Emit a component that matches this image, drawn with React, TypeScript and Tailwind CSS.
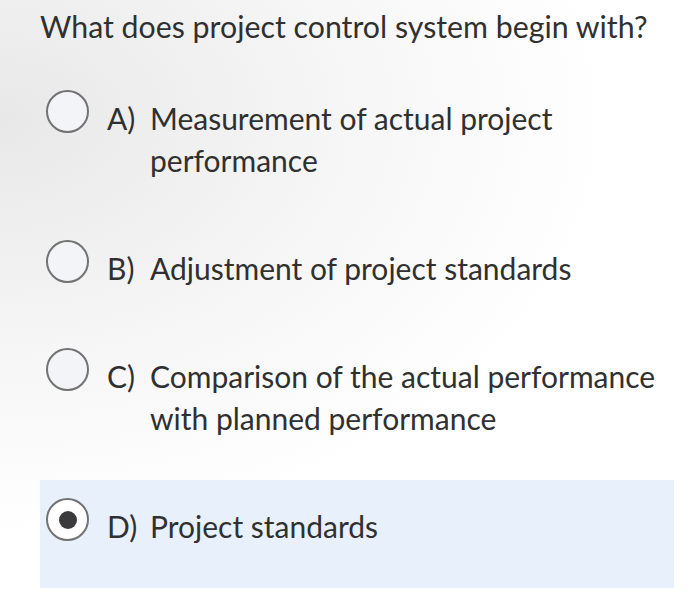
import type { ReactNode } from 'react'

type Option = {
  label: string
  text: ReactNode
  selected?: boolean
}

const options: Option[] = [
  { label: 'A)', text: <>Measurement of actual project<br />performance</> },
  { label: 'B)', text: 'Adjustment of project standards' },
  { label: 'C)', text: <>Comparison of the actual performance<br />with planned performance</> },
  { label: 'D)', text: 'Project standards', selected: true },
]

function Radio({ checked }: { checked?: boolean }) {
  return (
    <div
      className={`w-[43px] h-[43px] shrink-0 rounded-full border-2 border-[#727272] flex items-center justify-center -mt-[7px] ${
        checked ? 'bg-white' : 'bg-[#f3f4f8]'
      }`}
    >
      {checked && <div className="w-[18px] h-[18px] rounded-full bg-[#3b3b3d]" />}
    </div>
  )
}

export default function App() {
  return (
    <div
      className="w-[700px] h-[596px] overflow-hidden bg-white text-[#303030] bg-[radial-gradient(ellipse_at_0%_20%,#e8e8e8_0%,#f6f6f6_35%,#ffffff_62%)]"
      style={{ fontFamily: 'Lato, "Open Sans", sans-serif' }}
    >
      {/* Question */}
      <div className="pl-[40px] pt-[6px] text-[30.3px] leading-[40px]">
        What does project control system begin with?
      </div>

      {/* Options */}
      <div className="mt-[26px] ml-[40px] w-[634px]">
        {options.map(o => (
          <div
            key={o.label}
            className={`flex pl-[6px] pt-[25px] pb-[41px] text-[30px] leading-[42px] ${
              o.selected ? 'bg-[#e8f1fb]' : ''
            }`}
          >
            <Radio checked={o.selected} />
            <div className="w-[43px] ml-[18px] shrink-0">{o.label}</div>
            <div>{o.text}</div>
          </div>
        ))}
      </div>
    </div>
  )
}
